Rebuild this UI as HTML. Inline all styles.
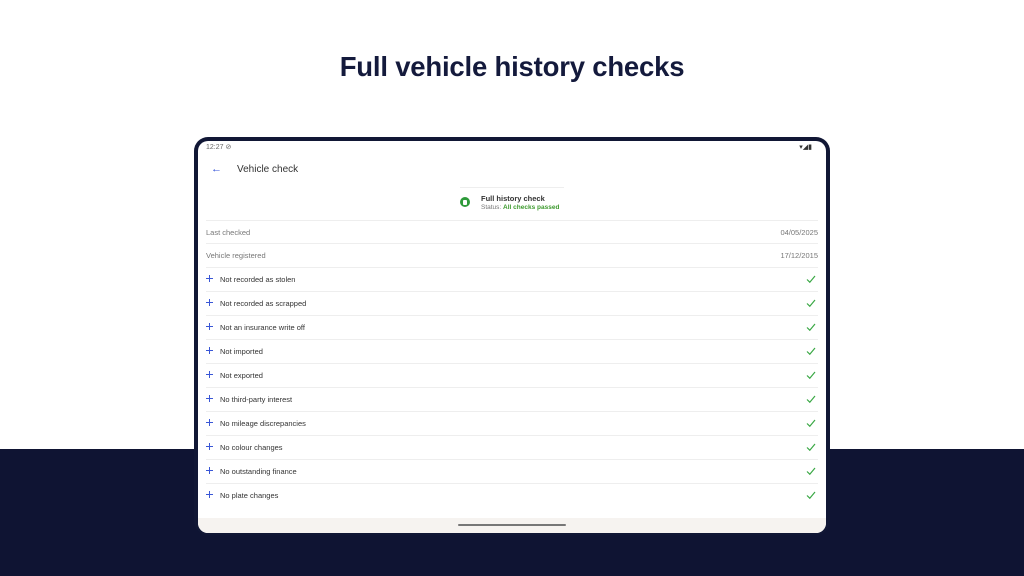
<!DOCTYPE html>
<html><head><style>
body{margin:0;width:1024px;height:576px;position:relative;background:#fff;font-family:"Liberation Sans",sans-serif;overflow:hidden}
.band{position:absolute;left:0;top:449px;width:1024px;height:127px;background:#0f1433}
h1{position:absolute;top:51px;left:0;width:1024px;text-align:center;margin:0;font-size:27.5px;font-weight:bold;color:#141a3c;letter-spacing:-0.2px}
.dev{position:absolute;left:194px;top:137px;width:636px;height:398px;background:#111735;border-radius:14px}
.scr{position:absolute;left:4px;top:4px;width:628px;height:392px;background:#fff;border-radius:10px;overflow:hidden}
.t{position:absolute;color:#555;font-size:8px}
.row{position:absolute;left:8px;width:612px;height:24px;border-top:1px solid #eee;font-size:7.5px;color:#333}
.row span{position:absolute;top:7px}
.pl{position:absolute;left:0;top:7px}
.ck{position:absolute;right:2px;top:6px}
</style></head><body>
<h1>Full vehicle history checks</h1>
<div class="band"></div>
<div class="dev"><div class="scr">
<div class="t" style="left:8px;top:2px;font-size:7px;color:#666">12:27 ⊘</div>
<div class="t" style="right:14px;top:2px;font-size:7px;color:#333">▾◢▮</div>
<div style="position:absolute;left:13px;top:22px;color:#2f4fd8;font-size:11px;font-weight:bold">←</div>
<div style="position:absolute;left:39px;top:23px;font-size:10px;color:#333">Vehicle check</div>
<div style="position:absolute;left:262px;top:46px;width:104px;border-top:1px solid #eee"></div>
<div style="position:absolute;left:262px;top:56px;width:10px;height:10px;border-radius:50%;background:#2e9a3a"><div style="position:absolute;left:3px;top:2.5px;width:4px;height:5px;background:#fff;border-radius:1px"></div></div>
<div style="position:absolute;left:283px;top:53px;font-size:7.5px;font-weight:bold;color:#333">Full history check</div>
<div style="position:absolute;left:283px;top:63px;font-size:6.5px;color:#777">Status: <b style="color:#3d9a2e">All checks passed</b></div>
<div class="row" style="top:79px;color:#777"><span style="left:0">Last checked</span><span style="right:0">04/05/2025</span></div>
<div class="row" style="top:102px;color:#777"><span style="left:0">Vehicle registered</span><span style="right:0">17/12/2015</span></div>
<div id="rows"></div>
<div style="position:absolute;left:0;top:377px;width:628px;height:15px;background:#f6f3f0"><div style="position:absolute;left:260px;top:6px;width:108px;height:2px;background:#777;border-radius:1px"></div></div>
</div></div>
<script>
var items=["Not recorded as stolen","Not recorded as scrapped","Not an insurance write off","Not imported","Not exported","No third-party interest","No mileage discrepancies","No colour changes","No outstanding finance","No plate changes"];
var h="";items.forEach(function(s,i){h+='<div class="row" style="top:'+(126+24*i)+'px"><svg class="pl" width="7" height="7" viewBox="0 0 7 7"><path d="M3.5 0V7M0 3.5H7" stroke="#3a57d6" stroke-width="1"/></svg><span style="left:14px">'+s+'</span><svg class="ck" width="10" height="10" viewBox="0 0 10 10"><path d="M1 5.5L3.8 8.2L9 2" fill="none" stroke="#3aa845" stroke-width="1.2"/></svg></div>'});
document.getElementById("rows").outerHTML=h;
</script>
</body></html>
